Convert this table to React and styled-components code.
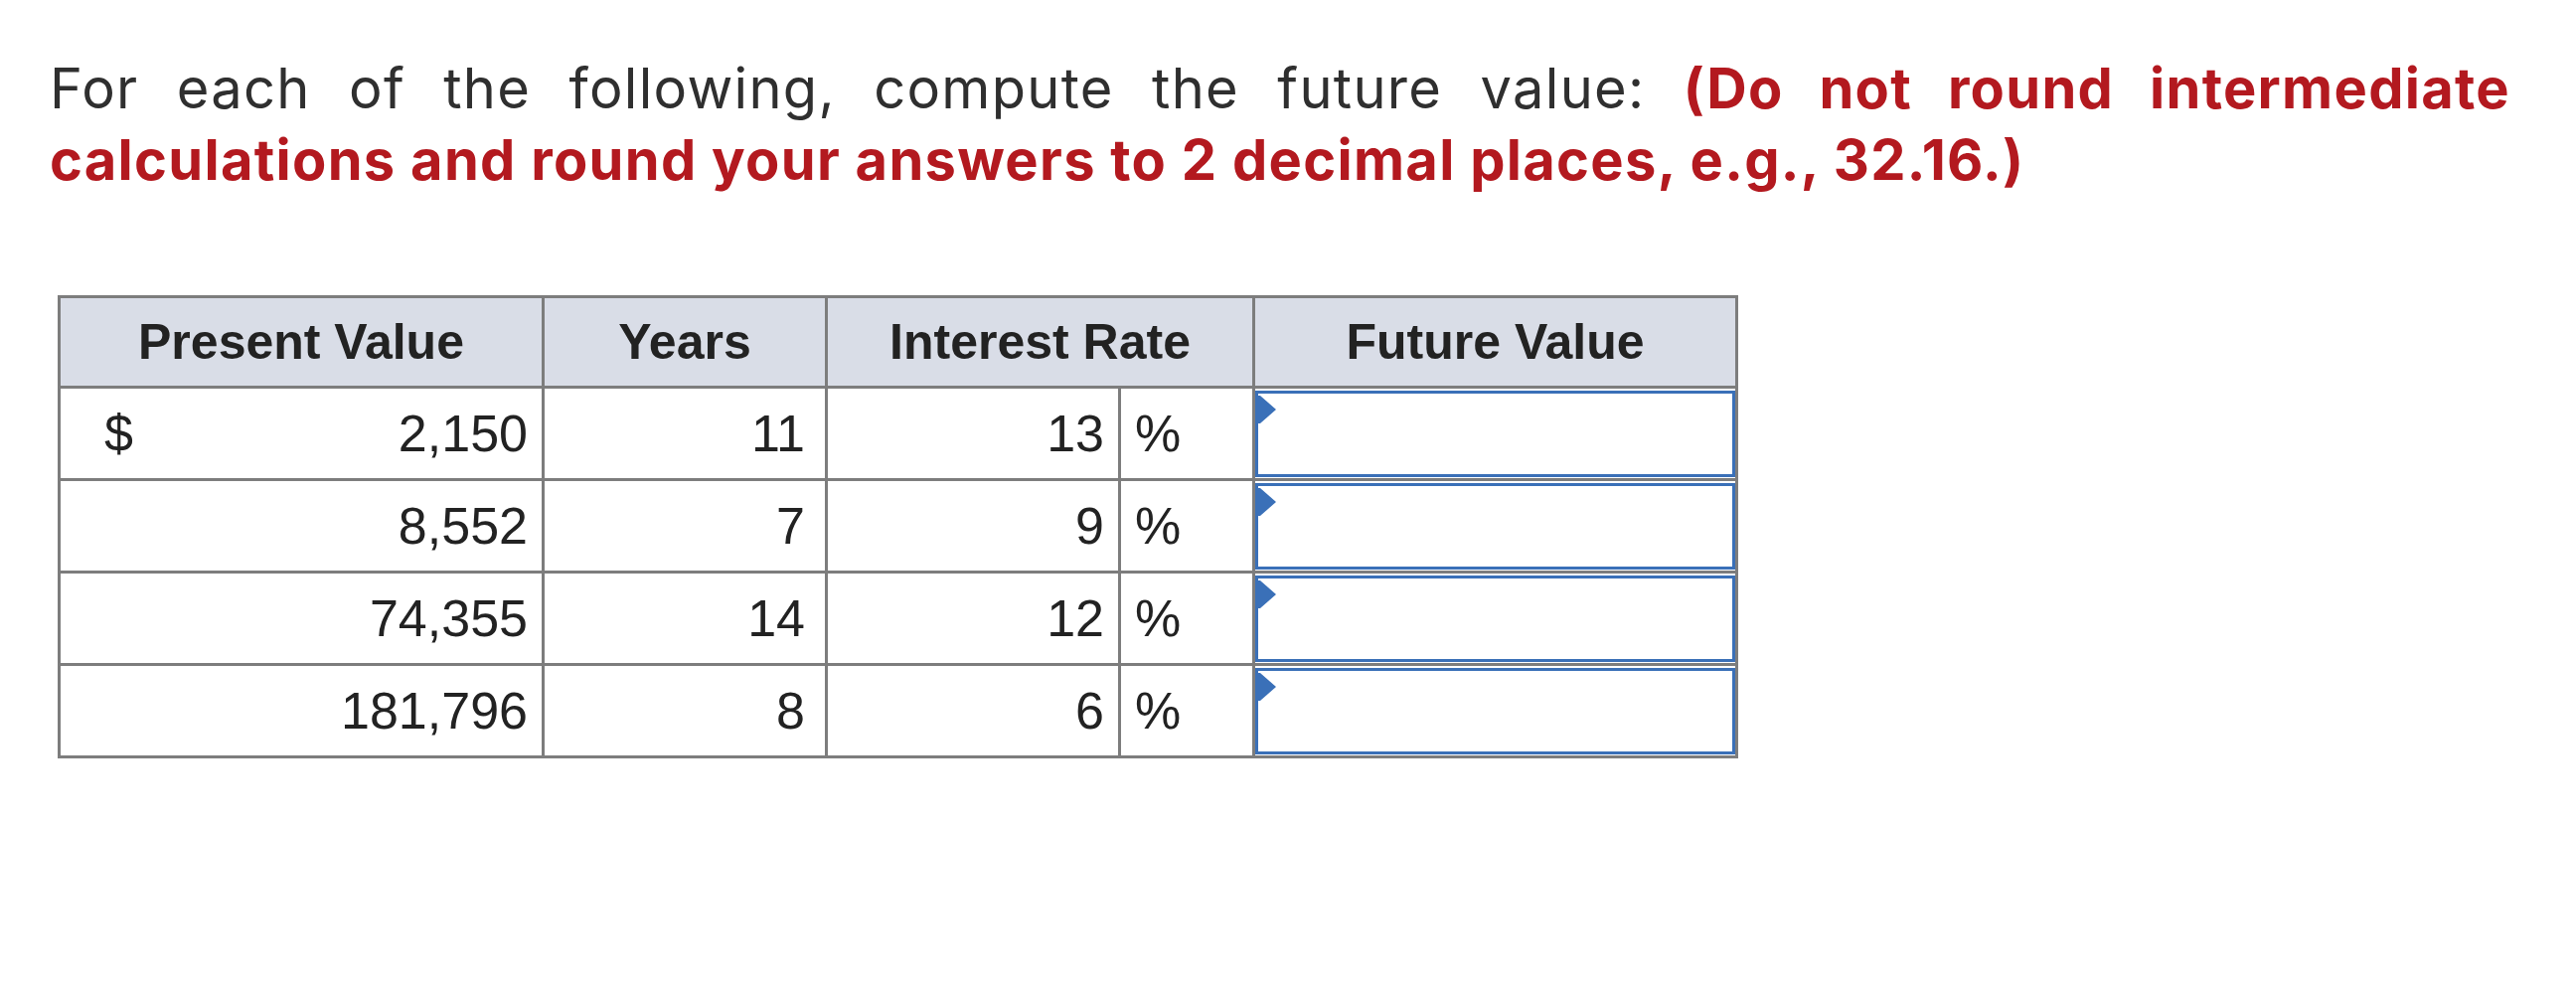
import React from "react";
import styled, { createGlobalStyle } from "styled-components";

const GlobalStyle = createGlobalStyle`
  html, body {
    margin: 0;
    padding: 0;
    background: #ffffff;
  }
`;

const Page = styled.div`
  display: flex;
  flex-direction: column;
  align-items: flex-start;
  gap: 100px;
  padding: 53px 0 0 50px;
`;

const Prompt = styled.p`
  margin: 0;
  width: 2476px;
  font-family: Inter, "Open Sans", sans-serif;
  font-size: 56px;
  letter-spacing: 1.3px;
  line-height: 72px;
  color: #2f2f2f;
  text-align: justify;
`;

const Note = styled.strong`
  font-weight: 700;
  color: #b3191f;
`;

const Table = styled.table`
  margin-left: 8px;
  width: 1688px;
  table-layout: fixed;
  border-collapse: collapse;
  font-family: "Liberation Sans", Arial, sans-serif;
  color: #222222;
`;

const HeadRow = styled.tr`
  height: 91px;
  background: #d9dde7;
`;

const HeadCell = styled.th`
  border: 3px solid #7d7d7d;
  font-size: 50px;
  font-weight: 700;
  text-align: center;
  padding: 0;
`;

const Row = styled.tr`
  height: 93px;
`;

const Cell = styled.td`
  border: 3px solid #7d7d7d;
  font-size: 52px;
  padding: 0 ${(p) => p.$padRight || 14}px 0 ${(p) => p.$padLeft || 14}px;
  text-align: ${(p) => p.$align || "right"};
  white-space: nowrap;
`;

const MoneyCell = styled.div`
  display: flex;
  justify-content: space-between;
  padding-left: 30px;
`;

const AnswerCell = styled.td`
  border: 3px solid #7d7d7d;
  padding: 0;
`;

const AnswerBox = styled.div`
  position: relative;
  height: 87px;
  border: 3px solid #3a70b8;
  box-sizing: border-box;
  background: #ffffff;
`;

const Flag = styled.svg`
  position: absolute;
  left: -1px;
  top: 2px;
`;

const rows = [
  { pv: "2,150", years: 11, rate: 13, dollar: true },
  { pv: "8,552", years: 7, rate: 9 },
  { pv: "74,355", years: 14, rate: 12 },
  { pv: "181,796", years: 8, rate: 6 },
];

export default function App() {
  return (
    <>
      <GlobalStyle />
      <Page>
        <Prompt>
          For each of the following, compute the future value:{" "}
          <Note>
            (Do not round intermediate calculations and round your answers to
            2 decimal places, e.g., 32.16.)
          </Note>
        </Prompt>
        <Table>
          <colgroup>
            <col style={{ width: 487 }} />
            <col style={{ width: 285 }} />
            <col style={{ width: 295 }} />
            <col style={{ width: 135 }} />
            <col style={{ width: 486 }} />
          </colgroup>
          <thead>
            <HeadRow>
              <HeadCell>Present Value</HeadCell>
              <HeadCell>Years</HeadCell>
              <HeadCell colSpan={2}>Interest Rate</HeadCell>
              <HeadCell>Future Value</HeadCell>
            </HeadRow>
          </thead>
          <tbody>
            {rows.map((r) => (
              <Row key={r.pv}>
                <Cell>
                  <MoneyCell>
                    <span>{r.dollar ? "$" : ""}</span>
                    <span>{r.pv}</span>
                  </MoneyCell>
                </Cell>
                <Cell $padRight={20}>{r.years}</Cell>
                <Cell>{r.rate}</Cell>
                <Cell $align="left">%</Cell>
                <AnswerCell>
                  <AnswerBox>
                    <Flag width="20" height="28" viewBox="0 0 20 28">
                      <polygon points="0,0 3,0 19,14 3,28 0,28" fill="#3a70b8" />
                    </Flag>
                  </AnswerBox>
                </AnswerCell>
              </Row>
            ))}
          </tbody>
        </Table>
      </Page>
    </>
  );
}
